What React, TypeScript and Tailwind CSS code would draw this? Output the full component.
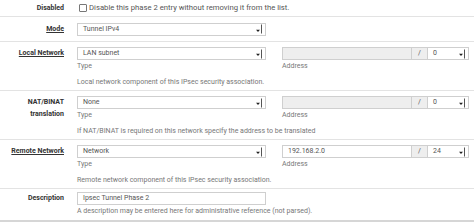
import React from "react";

const Caret = () => (
  <span className="absolute right-[3px] top-1/2 -translate-y-1/2 flex items-center">
    <svg width="4" height="6" viewBox="0 0 4 6">
      <path d="M0 3.2 L2 5.6 L4 3.2 Z" fill="#222" />
    </svg>
    <span className="ml-[1px] h-[9px] w-[1px] bg-[#555]" />
  </span>
);

function Select({ value, className = "" }: { value: string; className?: string }) {
  return (
    <div
      className={`relative h-[13px] border border-[#cfcfcf] bg-white pl-[5px] text-[#555] leading-[11px] ${className}`}
    >
      {value}
      <Caret />
    </div>
  );
}

function AddressGroup({ addr, mask, disabled }: { addr: string; mask: string; disabled?: boolean }) {
  return (
    <div className="flex w-[187px] h-[13px]">
      <div
        className={`flex-1 border border-[#cfcfcf] pl-[5px] leading-[11px] text-[#555] ${
          disabled ? "bg-[#eeeeee]" : "bg-white"
        }`}
      >
        {addr}
      </div>
      <div className="w-[15px] border-y border-[#cfcfcf] bg-[#eeeeee] text-center leading-[11px] text-[#555]">/</div>
      <Select value={mask} className={`w-[42px] ${disabled ? "bg-[#eeeeee]" : ""}`} />
    </div>
  );
}

function Label({ children, underline }: { children: React.ReactNode; underline?: boolean }) {
  return (
    <div className="w-[64px] shrink-0 text-right font-bold text-[#333] leading-[12px]">
      <span className={underline ? "underline underline-offset-[1px]" : ""}>{children}</span>
    </div>
  );
}

function NetworkRow({
  label,
  underline,
  type,
  addr,
  mask,
  disabled,
  help,
}: {
  label: React.ReactNode;
  underline?: boolean;
  type: string;
  addr: string;
  mask: string;
  disabled?: boolean;
  help: string;
}) {
  return (
    <div className="flex border-b border-[#e3e3e3] pt-[5px] pb-[3px]">
      <Label underline={underline}>{label}</Label>
      <div className="pl-[13px]">
        <div className="flex gap-[16px]">
          <div>
            <Select value={type} className="w-[189px]" />
            <div className="mt-[2px] leading-[9px] text-[#777]">Type</div>
          </div>
          <div>
            <AddressGroup addr={addr} mask={mask} disabled={disabled} />
            <div className="mt-[2px] leading-[9px] text-[#777]">Address</div>
          </div>
        </div>
        <div className="mt-[7px] leading-[9px] text-[#777]">{help}</div>
      </div>
    </div>
  );
}

export default function App() {
  return (
    <div
      className="w-[474px] h-[223px] overflow-hidden bg-white text-[7px]"
      style={{ fontFamily: "Roboto, 'Liberation Sans', sans-serif" }}
    >
      {/* Disabled */}
      <div className="flex h-[17px] items-center border-b border-[#e3e3e3]">
        <Label>Disabled</Label>
        <div className="flex items-center pl-[15px] text-[7.7px] text-[#555]">
          <span className="mr-[2px] h-[8px] w-[8px] border border-[#777] bg-white rounded-[1px]" />
          Disable this phase 2 entry without removing it from the list.
        </div>
      </div>

      {/* Mode */}
      <div className="flex h-[25px] items-center border-b border-[#e3e3e3]">
        <Label underline>Mode</Label>
        <div className="pl-[13px]">
          <Select value="Tunnel IPv4" className="w-[189px]" />
        </div>
      </div>

      <NetworkRow
        label="Local Network"
        underline
        type="LAN subnet"
        addr=""
        mask="0"
        disabled
        help="Local network component of this IPsec security association."
      />

      <NetworkRow
        label={
          <>
            NAT/BINAT
            <br />
            translation
          </>
        }
        type="None"
        addr=""
        mask="0"
        disabled
        help="If NAT/BINAT is required on this network specify the address to be translated"
      />

      <NetworkRow
        label="Remote Network"
        underline
        type="Network"
        addr="192.168.2.0"
        mask="24"
        help="Remote network component of this IPsec security association."
      />

      {/* Description */}
      <div className="flex border-b-2 border-[#d6d6d6] pt-[3px] pb-[4px]">
        <Label>Description</Label>
        <div className="pl-[13px]">
          <div className="h-[13px] w-[189px] border border-[#cfcfcf] bg-white pl-[5px] leading-[11px] text-[#555]">
            Ipsec Tunnel Phase 2
          </div>
          <div className="mt-[2px] leading-[9px] text-[#777]">
            A description may be entered here for administrative reference (not parsed).
          </div>
        </div>
      </div>
    </div>
  );
}
